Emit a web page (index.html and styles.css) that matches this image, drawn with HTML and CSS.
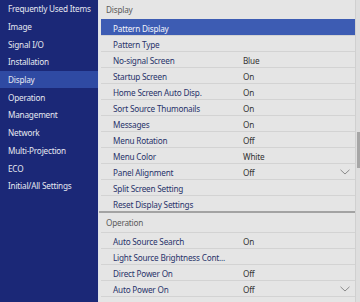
FILE: index.html
```html
<html>
<head>
<meta name="viewport" content="width=device-width, initial-scale=1.0">
<link rel="stylesheet" href="styles.css">
</head>
<body>
<div class="menu">
<div class="side">
<div class="item">Frequently Used Items</div>
<div class="item">Image</div>
<div class="item">Signal I/O</div>
<div class="item">Installation</div>
<div class="item sel">Display</div>
<div class="item">Operation</div>
<div class="item">Management</div>
<div class="item">Network</div>
<div class="item">Multi-Projection</div>
<div class="item">ECO</div>
<div class="item">Initial/All Settings</div>
</div>

<div class="panel">
<div class="list">
<div class="head">Display</div>
<div class="row sel"><span class="name">Pattern Display</span></div>
<div class="row"><span class="name">Pattern Type</span></div>
<div class="row"><span class="name">No-signal Screen</span><span class="val">Blue</span></div>
<div class="row"><span class="name">Startup Screen</span><span class="val">On</span></div>
<div class="row"><span class="name">Home Screen Auto Disp.</span><span class="val">On</span></div>
<div class="row"><span class="name">Sort Source Thumonails</span><span class="val">On</span></div>
<div class="row"><span class="name">Messages</span><span class="val">On</span></div>
<div class="row"><span class="name">Menu Rotation</span><span class="val">Off</span></div>
<div class="row"><span class="name">Menu Color</span><span class="val">White</span></div>
<div class="row"><span class="name">Panel Alignment</span><span class="val">Off</span><svg class="chev" viewBox="0 0 10 6"><path d="M0.5 0.8 L5 5 L9.5 0.8"/></svg></div>
<div class="row"><span class="name">Split Screen Setting</span></div>
<div class="row"><span class="name">Reset Display Settings</span></div>
<div class="divider"></div>
<div class="head">Operation</div>
<div class="row"><span class="name">Auto Source Search</span><span class="val">On</span></div>
<div class="row"><span class="name">Light Source Brightness Cont...</span></div>
<div class="row"><span class="name">Direct Power On</span><span class="val">Off</span></div>
<div class="row"><span class="name">Auto Power On</span><span class="val">Off</span><svg class="chev" viewBox="0 0 10 6"><path d="M0.5 0.8 L5 5 L9.5 0.8"/></svg></div>
<div class="row"><span class="name">Sleep Mode</span><span class="val">On</span></div>
</div>
<div class="scroll"><div class="thumb"></div></div>
</div>
</div>
</body>
</html>
```

FILE: styles.css
```css
*{
margin:0;
padding:0;
box-sizing:border-box;
}
body{
width:360px;
height:302px;
overflow:hidden;
font-family:"Noto Sans","Open Sans",sans-serif;
font-size:8.2px;
letter-spacing:-0.2px;
background:#e5e5e5;
}
.menu{
display:flex;
height:302px;
}
.side{
width:99px;
background:#1b2877;
border-right:1px solid #dfe1ea;
color:#e6e8f1;
flex-shrink:0;
}
.item{
height:17.7px;
display:flex;
align-items:center;
padding-left:8px;
white-space:nowrap;
}
.item.sel{
background:#2f4aa3;
}
.panel{
flex:1;
display:flex;
background:#e5e5e5;
}
.list{
flex:1;
}
.head{
height:19px;
display:flex;
align-items:center;
padding-left:7px;
color:#5a5a5a;
}
.row{
height:16px;
margin-left:2px;
display:flex;
align-items:center;
padding-left:12px;
padding-top:1px;
border-top:1px solid #d3d3d3;
color:#28336a;
position:relative;
white-space:nowrap;
}
.row.sel{
background:#3d5cb3;
color:#f2f4fb;
border-top-color:#3d5cb3;
}
.name{
width:130px;
}
.val{
color:#333;
}
.chev{
position:absolute;
right:5px;
top:5px;
width:10px;
height:6px;
fill:none;
stroke:#8a8a8a;
stroke-width:1;
}
.divider{
height:2px;
background:#a3a3a3;
}
.scroll{
width:5px;
background:#dedede;
border-left:1px solid #d0d0d0;
position:relative;
}
.thumb{
position:absolute;
left:1px;
top:132px;
width:3px;
height:36px;
background:#a6a6a6;
}
```
